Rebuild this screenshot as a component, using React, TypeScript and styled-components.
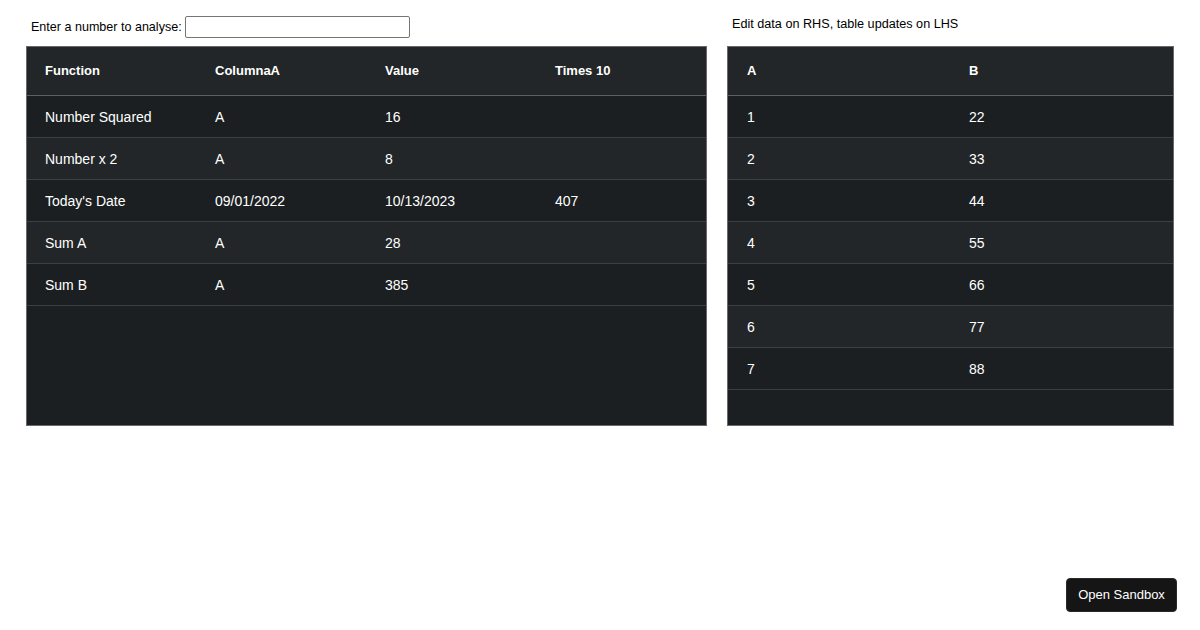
import React, { useState } from 'react';
import styled, { createGlobalStyle } from 'styled-components';

const GlobalStyle = createGlobalStyle`
    body {
        margin: 0;
        background: #fff;
        font-family: "Liberation Sans", Arial, sans-serif;
    }
`;

const Page = styled.div`
    display: flex;
    gap: 20px;
    padding: 16px 0 0 26px;
    width: 1200px;
    height: 630px;
    box-sizing: border-box;
`;

const Column = styled.div<{ $width: number }>`
    display: flex;
    flex-direction: column;
    gap: 8px;
    width: ${(p) => p.$width}px;
`;

const LabelRow = styled.label`
    display: flex;
    align-items: center;
    height: 22px;
    padding-left: 5px;
    font-size: 12.55px;
    line-height: 20px;
    color: #000;
`;

const NumberInput = styled.input`
    width: 225px;
    height: 22px;
    box-sizing: border-box;
    margin: 0 0 0 3px;
    border: 1px solid #767676;
    border-radius: 2px;
    padding: 1px 2px;
    font-size: 13px;
    font-family: inherit;
`;

const Caption = styled.p`
    margin: 0;
    padding: 1px 0 0 5px;
    height: 22px;
    box-sizing: border-box;
    line-height: 15px;
    font-size: 12.65px;
    color: #000;
`;

const Grid = styled.div`
    height: 380px;
    box-sizing: border-box;
    border: 1px solid #68686e;
    background: #1b1f21;
    color: #fff;
    overflow: hidden;
`;

const Row = styled.div<{ $cols: string; $pad: number; $odd?: boolean }>`
    display: grid;
    grid-template-columns: ${(p) => p.$cols};
    height: 42px;
    box-sizing: border-box;
    border-bottom: 1px solid #3b3f42;
    background: ${(p) => (p.$odd ? '#222628' : '#1b1f21')};

    & > div {
        display: flex;
        align-items: center;
        padding-left: ${(p) => p.$pad}px;
        font-size: 14px;
        white-space: nowrap;
    }
`;

const HeaderRow = styled(Row)`
    height: 49px;
    background: #222628;
    border-bottom: 1px solid #5d6063;

    & > div {
        padding-bottom: 2px;
        font-size: 13px;
        font-weight: 700;
    }
`;

const SandboxButton = styled.button`
    position: fixed;
    right: 23px;
    bottom: 18px;
    width: 111px;
    height: 34px;
    padding: 0 0 2px;
    background: #151515;
    color: #fff;
    border: 1px solid #2a2a2a;
    border-radius: 4px;
    font-family: "Liberation Sans", Arial, sans-serif;
    font-size: 13px;
    cursor: pointer;
`;

const functionRows = [
    ['Number Squared', 'A', '16', ''],
    ['Number x 2', 'A', '8', ''],
    ["Today's Date", '09/01/2022', '10/13/2023', '407'],
    ['Sum A', 'A', '28', ''],
    ['Sum B', 'A', '385', ''],
];

const dataRows = [
    ['1', '22'],
    ['2', '33'],
    ['3', '44'],
    ['4', '55'],
    ['5', '66'],
    ['6', '77'],
    ['7', '88'],
];

const App = () => {
    const [value, setValue] = useState('');
    const leftCols = 'repeat(4, 170px)';
    const rightCols = '222px 1fr';

    return (
        <>
            <GlobalStyle />
            <Page>
                <Column $width={681}>
                    <LabelRow>
                        Enter a number to analyse:
                        <NumberInput
                            value={value}
                            onChange={(e) => setValue(e.target.value)}
                        />
                    </LabelRow>
                    <Grid>
                        <HeaderRow $cols={leftCols} $pad={18}>
                            <div>Function</div>
                            <div>ColumnaA</div>
                            <div>Value</div>
                            <div>Times 10</div>
                        </HeaderRow>
                        {functionRows.map((r, i) => (
                            <Row key={i} $cols={leftCols} $pad={18} $odd={i % 2 === 1}>
                                {r.map((c, j) => (
                                    <div key={j}>{c}</div>
                                ))}
                            </Row>
                        ))}
                    </Grid>
                </Column>
                <Column $width={447}>
                    <Caption>Edit data on RHS, table updates on LHS</Caption>
                    <Grid>
                        <HeaderRow $cols={rightCols} $pad={19}>
                            <div>A</div>
                            <div>B</div>
                        </HeaderRow>
                        {dataRows.map((r, i) => (
                            <Row key={i} $cols={rightCols} $pad={19} $odd={i % 2 === 1}>
                                {r.map((c, j) => (
                                    <div key={j}>{c}</div>
                                ))}
                            </Row>
                        ))}
                    </Grid>
                </Column>
            </Page>
            <SandboxButton>Open Sandbox</SandboxButton>
        </>
    );
};

export default App;
